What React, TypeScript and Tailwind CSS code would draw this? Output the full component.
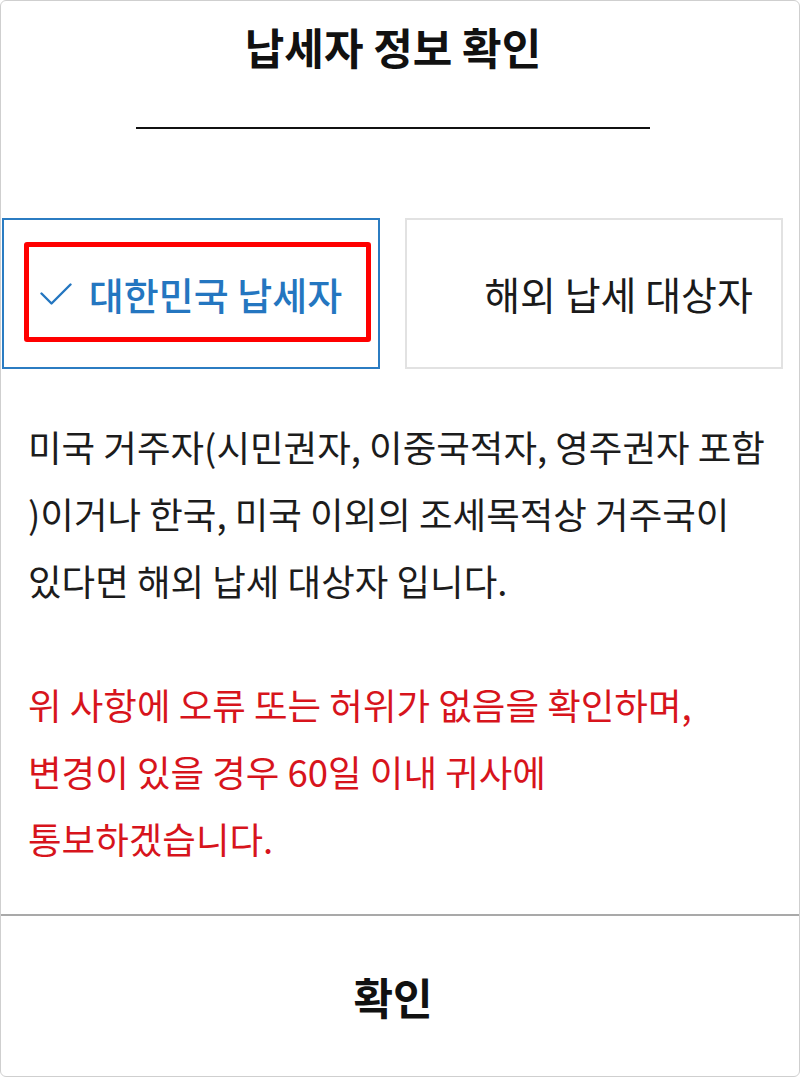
import React, { useState } from 'react';

const font = { fontFamily: '"Noto Sans CJK KR", "Noto Sans", sans-serif' };

type Choice = 'kr' | 'foreign';

const CheckMark: React.FC<{ visible: boolean }> = ({ visible }) => (
  <svg
    className={visible ? 'w-[32px] h-[22px] shrink-0' : 'w-[32px] h-[22px] shrink-0 invisible'}
    viewBox="0 0 32 22"
    fill="none"
    stroke="currentColor"
    strokeWidth={2.4}
    strokeLinecap="round"
    strokeLinejoin="round"
  >
    <path d="M1.5 10.5 L11.5 20.5 L30.5 1.5" />
  </svg>
);

export default function App() {
  const [choice, setChoice] = useState<Choice>('kr');

  return (
    <div className="w-full h-[1077px] bg-white" style={font}>
      <div className="h-full border border-[#cfcfcf] rounded-[6px] flex flex-col bg-white overflow-hidden">
        {/* Header */}
        <div className="w-[784px] flex flex-col items-center">
          <h1 className="mt-[12px] h-[66px] leading-[66px] text-[43px] font-bold text-[#111] text-center">
            납세자 정보 확인
          </h1>
          <div className="mt-[48px] w-[514px] h-[2px] bg-[#111]" />
        </div>

        {/* Taxpayer type */}
        <div className="w-[784px] mt-[89px] pl-[1px] flex gap-[25px]">
          <button
            onClick={() => setChoice('kr')}
            className={
              choice === 'kr'
                ? 'relative w-[378px] h-[151px] border-2 border-[#2b7cc2] flex items-center justify-center gap-[17px] text-[#2476c0]'
                : 'relative w-[378px] h-[151px] border-2 border-[#e2e2e2] flex items-center justify-center gap-[17px] text-[#1a1a1a]'
            }
          >
            <CheckMark visible={choice === 'kr'} />
            <span className="text-[38px] font-medium leading-none">대한민국 납세자</span>
            {/* highlight annotation */}
            <span className="absolute left-[20px] top-[22px] w-[347px] h-[100px] border-[5px] border-[#ff0000] rounded-[3px] pointer-events-none" />
          </button>
          <button
            onClick={() => setChoice('foreign')}
            className={
              choice === 'foreign'
                ? 'w-[378px] h-[151px] border-2 border-[#2b7cc2] flex items-center justify-center gap-[17px] text-[#2476c0]'
                : 'w-[378px] h-[151px] border-2 border-[#e2e2e2] flex items-center justify-center gap-[17px] text-[#1a1a1a]'
            }
          >
            <CheckMark visible={choice === 'foreign'} />
            <span className="text-[39px] leading-none">해외 납세 대상자</span>
          </button>
        </div>

        {/* Notice */}
        <div className="mt-[44px] px-[27px] text-[36.5px] leading-[67px] whitespace-nowrap">
          <p className="text-[#1c1c1c]">
            미국 거주자(시민권자, 이중국적자, 영주권자 포함
            <br />
            )이거나 한국, 미국 이외의 조세목적상 거주국이
            <br />
            있다면 해외 납세 대상자 입니다.
          </p>
          <p className="mt-[57px] text-[#d7141c]">
            위 사항에 오류 또는 허위가 없음을 확인하며,
            <br />
            변경이 있을 경우 60일 이내 귀사에
            <br />
            통보하겠습니다.
          </p>
        </div>

        {/* Footer */}
        <div className="mt-auto border-t-2 border-[#a9a9a9]">
          <button className="w-[784px] h-[160px] text-[43px] font-bold text-[#111] flex items-center justify-center">
            확인
          </button>
        </div>
      </div>
    </div>
  );
}
